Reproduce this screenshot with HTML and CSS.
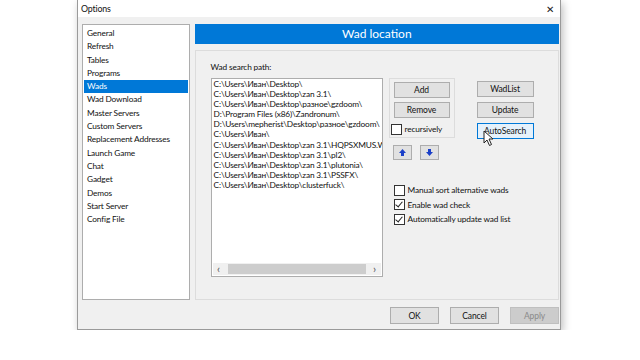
FILE: index.html
```html
<!DOCTYPE html>
<html lang="en">
<head>
    <meta charset="UTF-8">
    <title>Options</title>
    <link rel="stylesheet" href="styles.css">
</head>
<body>
    <div class="window">
        <div class="titlebar">
            <span>Options</span>
            <span class="close">&#x2715;</span>
        </div>
        <div class="main">
            <ul class="nav">
                <li>General</li>
                <li>Refresh</li>
                <li>Tables</li>
                <li>Programs</li>
                <li class="active">Wads</li>
                <li>Wad Download</li>
                <li>Master Servers</li>
                <li>Custom Servers</li>
                <li>Replacement Addresses</li>
                <li>Launch Game</li>
                <li>Chat</li>
                <li>Gadget</li>
                <li>Demos</li>
                <li>Start Server</li>
                <li>Config File</li>
            </ul>
            <div class="content">
                <div class="header">Wad location</div>
                <div class="panel">
                    <div class="paths">
                        <div class="label">Wad search path:</div>
                        <div class="pathlist">
                            <div class="lines">
                                <div>C:\Users\Иван\Desktop\</div>
                                <div>C:\Users\Иван\Desktop\zan 3.1\</div>
                                <div>C:\Users\Иван\Desktop\разное\gzdoom\</div>
                                <div>D:\Program Files (x86)\Zandronum\</div>
                                <div>D:\Users\mepherist\Desktop\разное\gzdoom\</div>
                                <div>C:\Users\Иван\</div>
                                <div>C:\Users\Иван\Desktop\zan 3.1\HQPSXMUS.WAD\</div>
                                <div>C:\Users\Иван\Desktop\zan 3.1\pl2\</div>
                                <div>C:\Users\Иван\Desktop\zan 3.1\plutonia\</div>
                                <div>C:\Users\Иван\Desktop\zan 3.1\PSSFX\</div>
                                <div>C:\Users\Иван\Desktop\clusterfuck\</div>
                            </div>
                            <div class="hscroll">
                                <span class="arr">&lsaquo;</span>
                                <span class="thumb"></span>
                                <span class="arr">&rsaquo;</span>
                            </div>
                        </div>
                    </div>
                    <div class="side">
                        <div class="side-top">
                            <div class="side-left">
                                <div class="group">
                                    <button class="btn">Add</button>
                                    <button class="btn">Remove</button>
                                    <label class="check"><span class="box"></span>recursively</label>
                                </div>
                                <div class="arrows">
                                    <button class="btn small">
                                        <svg width="9" height="9" viewBox="0 0 9 9"><path d="M4.5 1 L8 5 L6 5 L6 8 L3 8 L3 5 L1 5 Z" fill="#1a3fc8"/></svg>
                                    </button>
                                    <button class="btn small">
                                        <svg width="9" height="9" viewBox="0 0 9 9"><path d="M4.5 8 L8 4 L6 4 L6 1 L3 1 L3 4 L1 4 Z" fill="#1a3fc8"/></svg>
                                    </button>
                                </div>
                            </div>
                            <div class="side-right">
                                <button class="btn wide">WadList</button>
                                <button class="btn wide">Update</button>
                                <button class="btn wide hot">AutoSearch</button>
                            </div>
                        </div>
                        <div class="options">
                            <label class="check"><span class="box"></span>Manual sort alternative wads</label>
                            <label class="check"><span class="box on"></span>Enable wad check</label>
                            <label class="check"><span class="box on"></span>Automatically update wad list</label>
                        </div>
                    </div>
                </div>
            </div>
        </div>
        <div class="footer">
            <button class="btn foot">OK</button>
            <button class="btn foot">Cancel</button>
            <button class="btn foot disabled">Apply</button>
        </div>
        <svg class="cursor" width="11" height="17" viewBox="0 0 11 17"><path d="M1 1 L1 13 L4 10 L6.5 15.5 L8.5 14.5 L6 9 L10 9 Z" fill="#fff" stroke="#222" stroke-width="1"/></svg>
    </div>
</body>
</html>
```
FILE: styles.css
```css
body {
    margin: 0;
    background: #fff;
    font-family: Lato, "Noto Sans", sans-serif;
    font-size: 8.3px;
    letter-spacing: -0.15px;
    color: #111;
}
.window {
    position: relative;
    margin-left: 77px;
    width: 484px;
    height: 330px;
    background: #f0f0f0;
    border: 1px solid #9a9a9a;
    border-top: none;
    box-shadow: 2px 3px 8px rgba(0, 0, 0, 0.25);
    box-sizing: border-box;
}
.titlebar {
    height: 17px;
    background: #fff;
    display: flex;
    justify-content: space-between;
    align-items: center;
    padding: 0 6px 0 3px;
    font-size: 8.8px;
}
.close {
    font-size: 10px;
    color: #222;
}
.main {
    display: flex;
    padding: 7px 1px 0 4px;
}
.nav {
    list-style: none;
    margin: 0;
    padding: 2px 1px;
    width: 108px;
    height: 276px;
    box-sizing: border-box;
    background: #fff;
    border: 1px solid #adadad;
}
.nav li {
    height: 13.3px;
    line-height: 13.3px;
    padding-left: 3px;
}
.nav li.active {
    background: #0078d7;
    color: #fff;
}
.content {
    margin-left: 5px;
    width: 366px;
}
.header {
    height: 20px;
    line-height: 20px;
    background: #0078d7;
    color: #fff;
    text-align: center;
    font-size: 12px;
    letter-spacing: 0;
}
.panel {
    margin-top: 6px;
    height: 250px;
    box-sizing: border-box;
    border: 1px solid #dcdcdc;
    display: flex;
    padding: 11px 0 0 15px;
}
.label {
    height: 16px;
}
.pathlist {
    width: 172px;
    height: 199px;
    box-sizing: border-box;
    background: #fff;
    border: 1px solid #adadad;
    display: flex;
    flex-direction: column;
    justify-content: space-between;
    overflow: hidden;
}
.lines {
    padding: 0 0 0 2px;
    white-space: nowrap;
    line-height: 10.1px;
}
.hscroll {
    height: 12px;
    display: flex;
    align-items: center;
    background: #f0f0f0;
    margin: 0 1px 1px;
    color: #555;
    font-size: 11px;
}
.hscroll .arr {
    width: 12px;
    text-align: center;
    line-height: 10px;
}
.hscroll .thumb {
    flex: 1;
    height: 10px;
    background: #cdcdcd;
    margin: 0 3px;
}
.side {
    margin-left: 6px;
    padding-top: 16px;
}
.side-top {
    display: flex;
}
.side-left {
    width: 66px;
}
.group {
    height: 60px;
    box-sizing: border-box;
    border: 1px solid #dcdcdc;
    padding: 3px 4px 0 4px;
    display: flex;
    flex-direction: column;
    gap: 4px;
}
.btn {
    font-family: inherit;
    font-size: 8.5px;
    letter-spacing: -0.1px;
    color: #111;
    background: #e1e1e1;
    border: 1px solid #adadad;
    height: 16px;
    padding: 0;
    line-height: 14px;
}
.group .btn {
    width: 56px;
}
.arrows {
    display: flex;
    gap: 8px;
    margin-top: 7px;
    padding-left: 4px;
}
.btn.small {
    width: 19px;
    height: 15px;
    display: flex;
    align-items: center;
    justify-content: center;
}
.side-right {
    margin-left: 22px;
    display: flex;
    flex-direction: column;
    gap: 5px;
    padding-top: 3px;
}
.btn.wide {
    width: 57px;
}
.btn.hot {
    background: #e5f1fb;
    border-color: #0078d7;
}
.check {
    display: flex;
    align-items: center;
    height: 12px;
}
.box {
    width: 9px;
    height: 9px;
    border: 1px solid #333;
    background: #fff;
    margin-right: 3px;
    position: relative;
}
.box.on::after {
    content: "";
    position: absolute;
    left: 2px;
    top: 0;
    width: 3px;
    height: 6px;
    border-right: 1px solid #222;
    border-bottom: 1px solid #222;
    transform: rotate(40deg);
}
.group .check {
    margin-top: 1px;
    margin-left: -4px;
    padding-left: 1px;
}
.options {
    margin-top: 24px;
    display: flex;
    flex-direction: column;
    gap: 2.5px;
    padding-left: 5px;
}
.footer {
    display: flex;
    justify-content: flex-end;
    gap: 11px;
    padding: 7px 1px 0 0;
}
.btn.foot {
    width: 49px;
    height: 17px;
}
.btn.disabled {
    background: #cccccc;
    border-color: #bfbfbf;
    color: #8a8a8a;
}
.cursor {
    position: absolute;
    left: 405px;
    top: 130px;
}
```
